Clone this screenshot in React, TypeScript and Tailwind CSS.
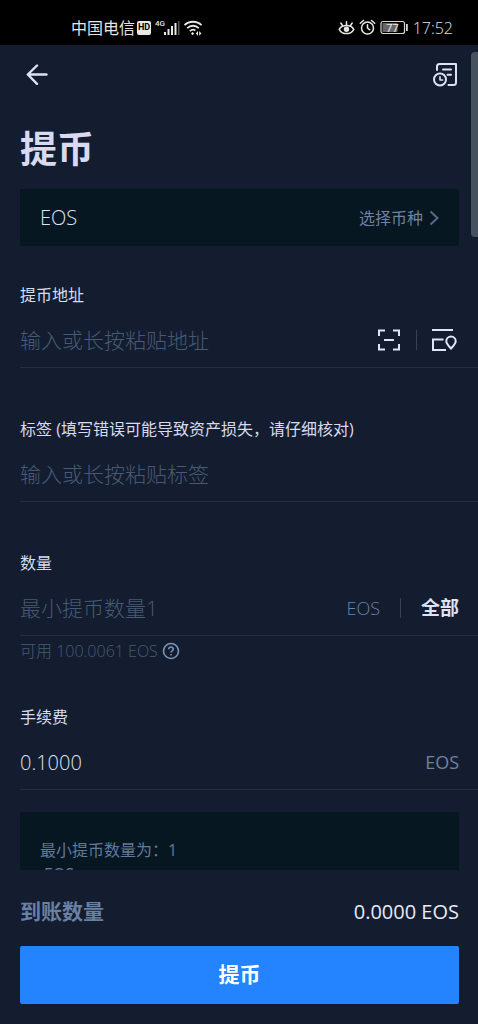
import { useId, type ReactNode } from "react";

function StatusBar() {
  return (
    <header className="flex h-[45px] shrink-0 items-center justify-between bg-black pt-[10px] pr-[25px] pl-[71px] text-[#e4e4e4]">
      <div className="flex items-center">
        <span className="text-[16px] leading-6">中国电信</span>
        <span className="ml-[2px] flex h-[14px] w-[14px] items-center justify-center rounded-[2px] bg-[#e8e8e8] font-['Roboto'] text-[9px] leading-none font-bold text-black">
          HD
        </span>
        <svg className="ml-1" width="32" height="18" viewBox="0 0 32 18" aria-label="4G">
          <text x="0" y="7" fontFamily="Roboto, sans-serif" fontSize="8" fontWeight="500" fill="#e4e4e4">
            4G
          </text>
          <g fill="#e8e8e8">
            <rect x="9" y="13" width="2" height="3" />
            <rect x="12.5" y="10" width="2" height="6" />
            <rect x="16" y="7" width="2" height="9" />
            <rect x="19.5" y="4" width="2" height="12" />
            <rect x="23" y="2" width="1.5" height="14" fill="#555" />
          </g>
        </svg>
        <svg className="-ml-1" width="20" height="18" viewBox="0 0 20 18" fill="none" stroke="#e8e8e8" strokeWidth="1.8" aria-label="Wi-Fi">
          <path d="M1.5 6.2c4.6-4.6 12.400-4.600 17 0" />
          <path d="M4.200 9.200c3.400-3.300 8.200-3.300 11.600 0" />
          <path d="M6.800 12.200c1.800-1.700 4-1.800 5.600-.8" />
          <path d="M9.600 13l1.600 1.600-1.600 1.600L8 14.600z" fill="#e8e8e8" stroke="none" />
          <path d="M15 12l-2.200 2.400L15 16.800zM16.200 12l2.200 2.400-2.200 2.400z" fill="#e8e8e8" stroke="none" />
        </svg>
      </div>
      <div className="flex items-center">
        <svg width="17" height="16" viewBox="0 0 17 16" fill="none" stroke="#e8e8e8" strokeWidth="1.500" strokeLinecap="round" aria-hidden="true">
          <path d="M1.200 9.300C4.200 4.200 12.800 4.200 15.800 9.300C12.800 15 4.200 15 1.200 9.300z" />
          <circle cx="8.500" cy="9.300" r="2.700" fill="#e8e8e8" stroke="none" />
          <path d="M8.500 4.800V1.800M4.500 5.500L2.800 3M12.500 5.500L14.200 3" />
        </svg>
        <svg className="ml-1" width="17" height="17" viewBox="0 0 17 17" fill="none" stroke="#e8e8e8" strokeWidth="1.500" strokeLinecap="round" aria-hidden="true">
          <circle cx="8.500" cy="9" r="6" />
          <path d="M8.500 5.800V9l2.200 1.800M1.300 4.200L4.500 1.500M15.700 4.200L12.500 1.500" />
        </svg>
        <svg className="ml-1" width="29" height="15" viewBox="0 0 29 15" aria-label="77%">
          <rect x="1" y="1.500" width="23.500" height="12" rx="2" fill="none" stroke="#d5d5d5" strokeWidth="1.200" />
          <rect x="2.500" y="3" width="15" height="9" fill="#666" />
          <rect x="26" y="4" width="1.800" height="7" fill="#d5d5d5" />
          <text x="12.500" y="11.500" textAnchor="middle" fontFamily="Roboto, sans-serif" fontSize="11" fill="#eee">
            77
          </text>
        </svg>
        <time className="ml-1 text-[16px] leading-6 font-light">17:52</time>
      </div>
    </header>
  );
}

function HistoryIcon() {
  return (
    <svg width="26" height="26" viewBox="0 0 26 26" fill="none" stroke="#dfe1f5" strokeWidth="2" strokeLinecap="round" strokeLinejoin="round" aria-hidden="true">
      <path d="M5 8V4.500Q5 2 7.500 2H24V20.500Q24 23 21.500 23H16.500" />
      <path d="M11 7.500H19M15.500 12.800H19" />
      <circle cx="8" cy="17.500" r="6" />
      <path d="M8 14.800V18h2.600" strokeWidth="1.600" />
    </svg>
  );
}

function ScanIcon() {
  return (
    <svg width="22" height="22" viewBox="0 0 22 22" fill="none" stroke="#dfe5f8" strokeWidth="2" aria-hidden="true">
      <path d="M1 7V1.500H7M15 1.500H21V7M21 15V20.500H15M7 20.500H1V15M6 11H16" />
    </svg>
  );
}

function AddressBookIcon() {
  return (
    <svg width="26" height="24" viewBox="0 0 26 24" fill="none" stroke="#dfe5f8" strokeWidth="2" aria-hidden="true">
      <path d="M1 2H22M12.500 11.500H2V22H15" />
      <path d="M20 20.500C17.500 17.800 15.300 15.700 15.300 13.300a4.700 4.700 0 0 1 9.400 0C24.700 15.700 22.500 17.800 20 20.500z" />
    </svg>
  );
}

type FieldProps = {
  label: string;
  placeholder?: string;
  value?: string;
  note?: ReactNode;
  children?: ReactNode;
};

function Field({ label, placeholder, value, note, children }: FieldProps) {
  const id = useId();
  return (
    <div>
      <label htmlFor={id} className="block text-[16px] leading-6 text-[#d8dbee]">
        {label}
      </label>
      <div className="mt-[6px] flex h-[55px] items-center border-b border-[#222f42] pr-[19px]">
        <input
          id={id}
          placeholder={placeholder}
          defaultValue={value}
          className="h-full min-w-0 flex-1 bg-transparent text-[20px] font-light text-[#dfe1f3] outline-none placeholder:text-[21px] placeholder:text-[#475a74]"
        />
        {children}
      </div>
      {note}
    </div>
  );
}

export default function App() {
  return (
    <div className="relative flex h-screen flex-col bg-[#131d2f] font-['Open_Sans','Noto_Sans_CJK_SC',sans-serif]">
      <StatusBar />
      <main className="min-h-0 flex-1 overflow-y-auto pl-5 [scrollbar-width:none]">
        <nav className="flex h-[60px] items-center justify-between pr-5">
          <button type="button" aria-label="返回" className="pl-[6px]">
            <svg width="22" height="22" viewBox="0 0 22 22" fill="none" stroke="#dfe1f5" strokeWidth="2.400" strokeLinecap="round" strokeLinejoin="round" aria-hidden="true">
              <path d="M20.500 10.500H1.800M11 1.500L1.800 10.500L11 19.800" />
            </svg>
          </button>
          <button type="button" aria-label="提币记录">
            <HistoryIcon />
          </button>
        </nav>
        <h1 className="mt-5 text-[37px] leading-[48px] font-bold text-[#d9daf0]">提币</h1>
        <button
          type="button"
          className="mt-4 mr-[19px] flex h-[57px] w-[calc(100%-19px)] items-center rounded-[2px] bg-[#061722] px-5"
        >
          <span className="flex-1 text-left text-[20px] font-light text-[#dfe4f2]">EOS</span>
          <span className="text-[16px] text-[#6f82a0]">选择币种</span>
          <svg className="ml-[6px]" width="10" height="16" viewBox="0 0 10 16" fill="none" stroke="#566a85" strokeWidth="2" aria-hidden="true">
            <path d="M1.500 1.500L8.500 8L1.500 14.500" />
          </svg>
        </button>

        <form className="mt-[37px] flex flex-col">
          <div className="flex flex-col gap-[49px]">
            <Field label="提币地址" placeholder="输入或长按粘贴地址">
              <button type="button" aria-label="扫码">
                <ScanIcon />
              </button>
              <span className="mr-[14px] ml-4 h-5 w-px bg-[#364357]" />
              <button type="button" aria-label="地址簿" className="pr-[2px]">
                <AddressBookIcon />
              </button>
            </Field>
            <Field label="标签 (填写错误可能导致资产损失，请仔细核对)" placeholder="输入或长按粘贴标签" />
            <Field
              label="数量"
              placeholder="最小提币数量1"
              note={
                <p className="flex h-[30px] items-center gap-1 text-[16px] font-light text-[#475a74]">
                  可用 100.0061 EOS
                  <svg width="18" height="18" viewBox="0 0 18 18" fill="none" stroke="#7b93b5" strokeWidth="1.600" aria-hidden="true">
                    <circle cx="9" cy="9" r="7.500" />
                    <path d="M6.800 7.300C6.800 4.300 11.300 4.300 11.300 7.100C11.300 8.900 9 8.800 9 10.600M9 12V13.600" />
                  </svg>
                </p>
              }
            >
              <span className="text-[18px] font-light text-[#6f82a0]">EOS</span>
              <span className="mx-5 h-5 w-px bg-[#364357]" />
              <button type="button" className="text-[19px] font-bold text-[#dfe1f5]">
                全部
              </button>
            </Field>
          </div>
          <div className="mt-[39px]">
            <Field label="手续费" value="0.1000">
              <span className="text-[18px] text-[#6f82a0]">EOS</span>
            </Field>
          </div>
        </form>

        <section className="mt-[22px] mr-[19px] rounded-[2px] bg-[#061722] px-5 pt-[26px] pb-6 text-[16px] leading-6 text-[#64789a]">
          <p>最小提币数量为：1</p>
          <p className="pl-1">EOS</p>
        </section>
      </main>

      <footer className="shrink-0 pt-6 pr-[19px] pb-5 pl-5">
        <div className="flex h-9 items-center justify-between">
          <span className="text-[21px] font-bold text-[#6a80a3]">到账数量</span>
          <output className="text-[20px] text-[#e8eafa]">0.0000 EOS</output>
        </div>
        <button
          type="button"
          className="mt-4 h-[58px] w-full rounded-[2px] bg-[#2483ff] text-[21px] font-bold text-white"
        >
          提币
        </button>
      </footer>
      <div className="pointer-events-none absolute top-[52px] right-0 h-[185px] w-[7px] rounded-l-[4px] bg-[#47525f]" />
    </div>
  );
}
